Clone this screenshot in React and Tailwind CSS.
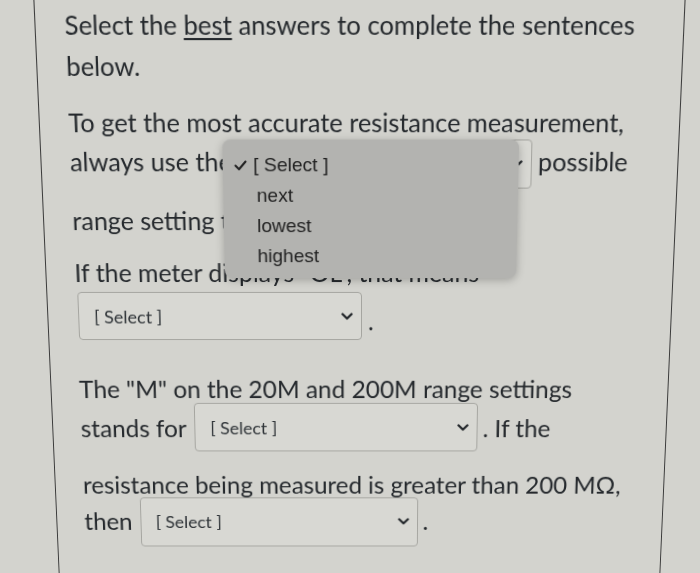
import React from 'react';

const Chevron = () => (
  <svg width="12" height="8" viewBox="0 0 12 8" className="shrink-0">
    <path d="M1.5 1.5 L6 6 L10.5 1.5" fill="none" stroke="#25292d" strokeWidth="2.4" strokeLinecap="round" strokeLinejoin="round" />
  </svg>
);

function Select({ className = '' }) {
  return (
    <div className={`flex shrink-0 items-center justify-between rounded-[4px] border border-[#a5a5a0] bg-[#d8d8d3] pl-[15px] pr-[8px] ${className}`}>
      <span className="text-[18px] leading-none text-[#2f3438]">[ Select ]</span>
      <Chevron />
    </div>
  );
}

const options = ['next', 'lowest', 'highest'];

export default function App() {
  return (
    <div className="h-[573px] w-[700px] overflow-hidden bg-[#d3d3ce]">
      <div className="relative h-[600px] w-[700px] origin-[360px_286px] [transform:perspective(1000px)_rotateX(-8deg)] [font-family:Lato,sans-serif] text-[24.8px] text-[#25292d]">
        <div className="ml-[46px] h-full w-[627px] border-x border-[#3a3a3a] pl-[28px]">
          <p className="pt-[12px] leading-[39px]">
            Select the <span className="underline underline-offset-[3px]">best</span> answers to complete the sentences
            <br />
            below.
          </p>

          <p className="mt-[15px] leading-[39px]">To get the most accurate resistance measurement,</p>

          <div className="mt-[-3px] flex h-[49px] items-start">
            <span className="mt-[10px] leading-none">always use the</span>
            <Select className="ml-[6px] h-[48px] w-[289px]" />
            <span className="ml-[6px] mt-[10px] leading-none">possible</span>
          </div>

          <p className="mt-[10.5px] leading-[39px]">range setting that works.</p>

          <p className="mt-[13.5px] leading-[39px]">If the meter displays "OL", that means</p>

          <div className="flex h-[49px] items-start">
            <Select className="ml-[2px] h-[49px] w-[285px]" />
            <span className="ml-[6px] mt-[18px] leading-none">.</span>
          </div>

          <p className="mt-[35px] leading-[32px]">The "M" on the 20M and 200M range settings</p>

          <div className="mt-[-2px] flex h-[51px] items-start">
            <span className="mt-[15px] leading-none">stands for</span>
            <Select className="ml-[8px] h-[51px] w-[289px]" />
            <span className="ml-[5px] mt-[15px] leading-none">. If the</span>
          </div>

          <p className="mt-[20.5px] leading-[30px]">resistance being measured is greater than 200 MΩ,</p>

          <div className="mt-[-2px] flex h-[53px] items-start">
            <span className="mt-[14.5px] leading-none">then</span>
            <Select className="ml-[8px] h-[53px] w-[287px]" />
            <span className="ml-[5px] mt-[14.5px] leading-none">.</span>
          </div>
        </div>

        <div className="absolute left-[225px] top-[141px] h-[137px] w-[291px] rounded-[8px] bg-[#b3b3b0] pt-[10px] text-[19px] leading-[30px] text-[#222222] shadow-[0_2px_8px_rgba(0,0,0,0.25)] [font-family:'Liberation_Sans',Arial,sans-serif]">
          <div className="relative pl-[30px]">
            <svg width="13" height="11" viewBox="0 0 13 11" className="absolute left-[11px] top-[10px]">
              <path d="M1.5 5.5 L5 9 L11.5 1.5" fill="none" stroke="#222222" strokeWidth="2" strokeLinecap="round" strokeLinejoin="round" />
            </svg>
            [ Select ]
          </div>
          {options.map((o) => (
            <div key={o} className="pl-[33px]">{o}</div>
          ))}
        </div>
      </div>
    </div>
  );
}
